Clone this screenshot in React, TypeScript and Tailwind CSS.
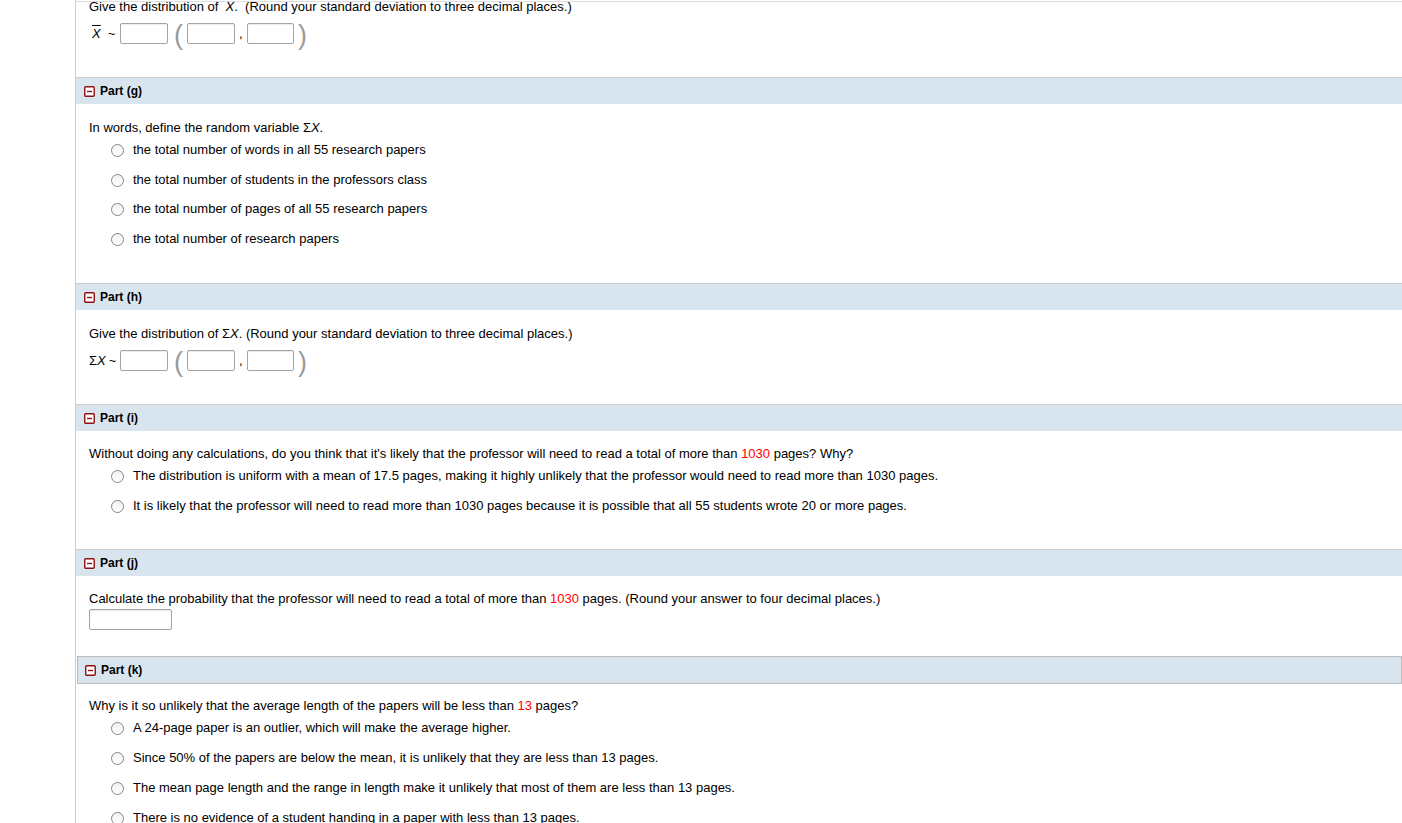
import React from "react";

const Radio = () => (
  <span className="inline-block w-[13px] h-[13px] rounded-full border border-[#858585] bg-gradient-to-b from-[#f2f2f2] to-white shrink-0" />
);

const Icon = () => (
  <svg width="11" height="11" viewBox="0 0 11 11" className="shrink-0">
    <rect x="0.75" y="0.75" width="9.5" height="9.5" rx="1" fill="#fff" stroke="#8f1010" strokeWidth="1.4" />
    <line x1="3" y1="5.5" x2="8" y2="5.5" stroke="#8f1010" strokeWidth="1.4" />
  </svg>
);

const Header = ({ label, boxed }: { label: string; boxed?: boolean }) => (
  <div
    className={
      boxed
        ? "h-[28px] bg-[#d9e5ee] border border-[#bcbcbc] ml-[1px] flex items-center pl-[7px]"
        : "h-[27px] bg-[#d9e5ee] border-t border-[#cccccc] flex items-center pl-[8px]"
    }
  >
    <Icon />
    <span className="ml-[5px] text-[12px] font-bold text-black">{label}</span>
  </div>
);

const Box = ({ w }: { w: string }) => (
  <span className={`inline-block h-[21px] ${w} border border-[#a4a4a4] rounded-[2px] bg-white shadow-[inset_0_1px_1px_rgba(0,0,0,0.08)] shrink-0`} />
);

const Paren = ({ c, cls }: { c: string; cls: string }) => (
  <span className={`text-[27px] leading-none text-[#9a9a9a] translate-y-[2px] ${cls}`}>{c}</span>
);

const DistRow = ({ prefix }: { prefix: React.ReactNode }) => (
  <div className="flex items-center h-[22px] pl-[13px]">
    <span className="w-[31px] flex items-center h-[22px] pt-[2px] text-[13px]">{prefix}</span>
    <Box w="w-[48px]" />
    <Paren c="(" cls="ml-[6px]" />
    <Box w="w-[48px] ml-[4px]" />
    <span className="text-[13px] ml-[4px] w-[4px] pt-[2px]">,</span>
    <Box w="w-[47px] ml-[4px]" />
    <Paren c=")" cls="ml-[4px]" />
  </div>
);

const Option = ({ children, cls = "" }: { children: React.ReactNode; cls?: string }) => (
  <div className={`flex items-center h-[22px] pt-[2px] pl-[35px] ${cls}`}>
    <Radio />
    <span className="ml-[9px]">{children}</span>
  </div>
);

const Q = ({ children, cls = "" }: { children: React.ReactNode; cls?: string }) => (
  <div className={`flex items-center h-[22px] pt-[2px] pl-[13px] ${cls}`}>{children}</div>
);

const Red = ({ children }: { children: React.ReactNode }) => <span className="text-[#ff0000]">{children}</span>;

export default function App() {
  return (
    <div
      className="w-[1402px] h-[823px] overflow-hidden bg-white text-black text-[13px] flex"
      style={{ fontFamily: '"Liberation Sans", Arial, Helvetica, sans-serif' }}
    >
      <div className="w-[75px] shrink-0" />
      <div className="flex-1 border-l border-[#cccccc] flex flex-col *:shrink-0">
        {/* top part (f) tail */}
        <div className="mt-[1px] border-t border-[#dddddd]">
          <div className="flex items-center h-[16px] -mt-[3px] pl-[13px]">
            Give the distribution of&nbsp;&nbsp;<i>X</i>.&nbsp;&nbsp;(Round your standard deviation to three decimal places.)
          </div>
          <div className="mt-[7px]">
            <DistRow
              prefix={
                <>
                  <i className="overline ml-[3px]">X</i>
                  <span className="ml-[7px]">~</span>
                </>
              }
            />
          </div>
          <div className="h-[33px]" />
        </div>

        {/* Part g */}
        <Header label="Part (g)" />
        <Q cls="mt-[12px]">
          In words, define the random variable&nbsp;Σ<i>X</i>.
        </Q>
        <Option>the total number of words in all 55 research papers</Option>
        <Option cls="mt-[8px]">the total number of students in the professors class</Option>
        <Option cls="mt-[7px]">the total number of pages of all 55 research papers</Option>
        <Option cls="mt-[8px]">the total number of research papers</Option>
        <div className="h-[34px]" />

        {/* Part h */}
        <Header label="Part (h)" />
        <Q cls="mt-[12px]">
          Give the distribution of Σ<i>X</i>. (Round your standard deviation to three decimal places.)
        </Q>
        <div className="mt-[5px]">
          <DistRow
            prefix={
              <>
                <span>Σ</span>
                <i>X</i>
                <span className="ml-[3px]">~</span>
              </>
            }
          />
        </div>
        <div className="h-[33px]" />

        {/* Part i */}
        <Header label="Part (i)" />
        <Q cls="mt-[11px]">
          Without doing any calculations, do you think that it's likely that the professor will need to read a total of more than&nbsp;<Red>1030</Red>&nbsp;pages? Why?
        </Q>
        <Option>The distribution is uniform with a mean of 17.5 pages, making it highly unlikely that the professor would need to read more than 1030 pages.</Option>
        <Option cls="mt-[8px]">It is likely that the professor will need to read more than 1030 pages because it is possible that all 55 students wrote 20 or more pages.</Option>
        <div className="h-[33px]" />

        {/* Part j */}
        <Header label="Part (j)" />
        <Q cls="mt-[11px]">
          Calculate the probability that the professor will need to read a total of more than&nbsp;<Red>1030</Red>&nbsp;pages. (Round your answer to four decimal places.)
        </Q>
        <div className="pl-[13px] flex">
          <Box w="w-[83px]" />
        </div>
        <div className="h-[26px]" />

        {/* Part k */}
        <Header label="Part (k)" boxed />
        <Q cls="mt-[10px]">
          Why is it so unlikely that the average length of the papers will be less than&nbsp;<Red>13</Red>&nbsp;pages?
        </Q>
        <Option>A 24-page paper is an outlier, which will make the average higher.</Option>
        <Option cls="mt-[8px]">Since 50% of the papers are below the mean, it is unlikely that they are less than 13 pages.</Option>
        <Option cls="mt-[8px]">The mean page length and the range in length make it unlikely that most of them are less than 13 pages.</Option>
        <Option cls="mt-[8px]">There is no evidence of a student handing in a paper with less than 13 pages.</Option>
      </div>
    </div>
  );
}
